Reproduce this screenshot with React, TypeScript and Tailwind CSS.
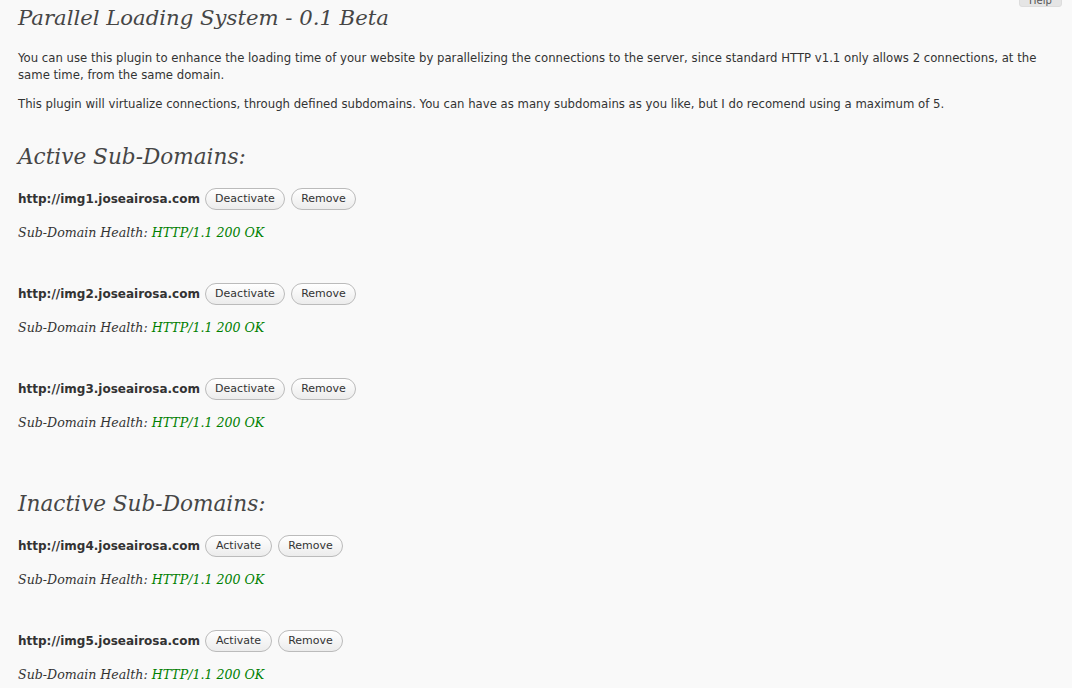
const SERIF = "font-['Georgia','DejaVu_Serif',serif] italic";
const SANS = "font-['Lucida_Grande','DejaVu_Sans',sans-serif]";

function Btn({ label, w }: { label: string; w: string }) {
  return (
    <button
      className={`${SANS} ${w} h-[22px] rounded-full border border-[#bbb] bg-gradient-to-b from-white to-[#ececec] text-[11px] text-[#333]`}
    >
      {label}
    </button>
  );
}

function Domain({ n, active }: { n: number; active: boolean }) {
  return (
    <div className="h-[95px]">
      <div className="flex h-[22px] items-center gap-[6px]">
        <strong className={`${SANS} mr-[-1px] text-[12px] text-[#333]`}>http://img{n}.joseairosa.com</strong>
        <Btn label={active ? "Deactivate" : "Activate"} w={active ? "w-[80px]" : "w-[67px]"} />
        <Btn label="Remove" w="w-[65px]" />
      </div>
      <p className={`${SERIF} mt-[14px] text-[12.6px] text-[#333]`}>
        Sub-Domain Health: <span className="text-[#008000]">HTTP/1.1 200 OK</span>
      </p>
    </div>
  );
}

export default function App() {
  return (
    <div className="relative h-[688px] w-[1072px] overflow-hidden bg-[#f9f9f9] pl-[18px] pr-[20px] text-[#333]">
      <div className={`${SANS} absolute right-[10px] top-[-14px] h-[21px] w-[43px] rounded-b-[3px] border border-[#ddd] bg-[#e5e5e5] text-center text-[10px] leading-[28px] text-[#555]`}>
        Help
      </div>
      <h2 className={`${SERIF} pt-[3px] text-[21.2px] leading-[29px] text-[#464646]`}>Parallel Loading System - 0.1 Beta</h2>
      <p className={`${SANS} mt-[18px] text-[11.7px] leading-[17px]`}>
        You can use this plugin to enhance the loading time of your website by parallelizing the connections to the server, since standard HTTP v1.1 only allows 2 connections, at the same time, from the same domain.
      </p>
      <p className={`${SANS} mt-[12px] text-[11.7px] leading-[17px]`}>
        This plugin will virtualize connections, through defined subdomains. You can have as many subdomains as you like, but I do recomend using a maximum of 5.
      </p>
      <h3 className={`${SERIF} mt-[29px] text-[21.6px] leading-[30px] text-[#464646]`}>Active Sub-Domains:</h3>
      <div className="mt-[16px]">
        <Domain n={1} active />
        <Domain n={2} active />
        <Domain n={3} active />
      </div>
      <h3 className={`${SERIF} mt-[16px] text-[21.6px] leading-[30px] text-[#464646]`}>Inactive Sub-Domains:</h3>
      <div className="mt-[16px]">
        <Domain n={4} active={false} />
        <Domain n={5} active={false} />
      </div>
    </div>
  );
}
